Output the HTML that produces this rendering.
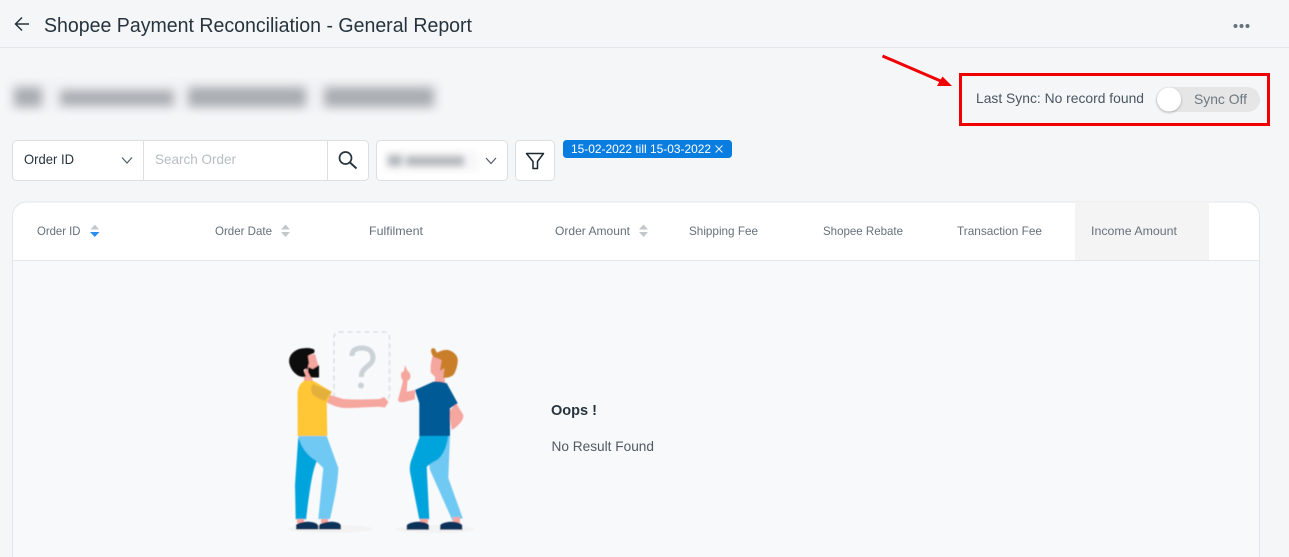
<!DOCTYPE html>
<html lang="en"><head><meta charset="utf-8"><title>Shopee Payment Reconciliation - General Report</title>
<style>
html,body{margin:0;padding:0;width:1289px;height:557px;overflow:hidden;background:#f5f6f8}
svg{display:block}
text{font-family:"Liberation Sans",sans-serif}
</style></head><body>
<svg width="1289" height="557" viewBox="0 0 1289 557" xmlns="http://www.w3.org/2000/svg">
<defs>
<filter id="b6" x="-20%" y="-100%" width="140%" height="300%"><feGaussianBlur stdDeviation="5"/></filter>
<filter id="b3" x="-20%" y="-100%" width="140%" height="300%"><feGaussianBlur stdDeviation="3.500"/></filter>
<filter id="soft" x="-5%" y="-5%" width="110%" height="110%"><feGaussianBlur stdDeviation="0.500"/></filter>
<filter id="sh" x="-50%" y="-50%" width="200%" height="200%"><feDropShadow dx="0" dy="1" stdDeviation="1.200" flood-color="#000" flood-opacity=".3"/></filter>
</defs>
<rect width="1289" height="557" fill="#f5f6f8"/>
<!-- header -->
<rect x="0" y="47" width="1289" height="1" fill="#e3e5e8"/>
<path d="M29 24H16M22 17.500L15.500 24L22 30.500" fill="none" stroke="#27343e" stroke-width="1.500"/>
<text x="44" y="32" font-size="20" fill="#27343e" textLength="428" lengthAdjust="spacingAndGlyphs">Shopee Payment Reconciliation - General Report</text>
<circle cx="1235.500" cy="26" r="2" fill="#68727b"/><circle cx="1241.500" cy="26" r="2" fill="#68727b"/><circle cx="1247.500" cy="26" r="2" fill="#68727b"/>
<!-- blurred company name -->
<rect x="8" y="80" width="433" height="31" fill="#f2f3f5" filter="url(#b3)"/>
<g fill="#a9adb2" filter="url(#b6)">
<rect x="14" y="87" width="28" height="20"/>
<rect x="60" y="90" width="114" height="16"/>
<rect x="188" y="87" width="118" height="20"/>
<rect x="324" y="87" width="110" height="20"/>
</g>
<!-- sync -->
<text x="976" y="103" font-size="14" fill="#4a5661" textLength="168" lengthAdjust="spacingAndGlyphs">Last Sync: No record found</text>
<rect x="1156" y="87" width="104" height="25" rx="12.500" fill="#e6e6e6"/>
<circle cx="1169" cy="99.500" r="12" fill="#fff" filter="url(#sh)"/>
<text x="1194" y="104" font-size="14" fill="#6d7880" textLength="53" lengthAdjust="spacingAndGlyphs">Sync Off</text>
<rect x="960.500" y="74.500" width="308" height="50" fill="none" stroke="#f00000" stroke-width="3"/>
<path d="M882.500 56L943 82" stroke="#f00000" stroke-width="3" fill="none"/>
<path d="M952 86L937 86L942.500 76.500Z" fill="#f00000"/>
<!-- search group -->
<rect x="12.500" y="140.500" width="356" height="40" rx="4" fill="#fff" stroke="#dcdfe2"/>
<rect x="143" y="141" width="1" height="39" fill="#dcdfe2"/>
<rect x="327" y="141" width="1" height="39" fill="#dcdfe2"/>
<text x="24" y="164" font-size="14" fill="#27343e" textLength="50" lengthAdjust="spacingAndGlyphs">Order ID</text>
<path d="M122 157.500L127 163L132 157.500" fill="none" stroke="#4a5661" stroke-width="1.100"/>
<text x="155" y="164" font-size="14" fill="#b9bdc1" textLength="81" lengthAdjust="spacingAndGlyphs">Search Order</text>
<circle cx="345.500" cy="158" r="6" fill="none" stroke="#27343e" stroke-width="1.700"/>
<path d="M350 162.500L356.500 168.500" stroke="#27343e" stroke-width="1.900"/>
<!-- second select -->
<rect x="376.500" y="140.500" width="131" height="40" rx="4" fill="#fff" stroke="#dcdfe2"/>
<rect x="385" y="151" width="93" height="20" fill="#f7f7f8" filter="url(#b3)"/>
<g fill="#b4b8bc" filter="url(#b3)"><rect x="388" y="155" width="14" height="11"/><rect x="406" y="156" width="58" height="10"/></g>
<path d="M486 158L491 163.500L496 158" fill="none" stroke="#4a5661" stroke-width="1.100"/>
<!-- filter -->
<rect x="515.500" y="140.500" width="39" height="40" rx="4" fill="#fff" stroke="#dcdfe2"/>
<path d="M526.500 153.500H543.500L537.500 161.500V168.500H533V161.500Z" fill="none" stroke="#1c2730" stroke-width="1.500" stroke-linejoin="round"/>
<!-- tag -->
<rect x="563" y="140" width="169" height="18" rx="3.500" fill="#0a7ee0"/>
<text x="571" y="153" font-size="12" fill="#fff" textLength="140" lengthAdjust="spacingAndGlyphs">15-02-2022 till 15-03-2022</text>
<path d="M715.500 145.500L722.500 152.500M722.500 145.500L715.500 152.500" stroke="#e6f2fc" stroke-width="1"/>
<!-- table -->
<path d="M12.500 570V216a14 14 0 0 1 14-14H1245.500a14 14 0 0 1 14 14V570Z" fill="#f8f9fb" stroke="#e3e5e8"/>
<path d="M13 260V216a13.500 13.500 0 0 1 13.500-13.500H1245.500A13.500 13.500 0 0 1 1259 216V260Z" fill="#fff"/>
<rect x="1075" y="202" width="134" height="58" fill="#f4f4f5"/>
<rect x="13" y="260" width="1246" height="1" fill="#e3e5e8"/>
<g font-size="12" fill="#65707a">
<text x="37" y="235" textLength="43.500" lengthAdjust="spacingAndGlyphs">Order ID</text>
<text x="215" y="235" textLength="57" lengthAdjust="spacingAndGlyphs">Order Date</text>
<text x="369" y="235" textLength="54" lengthAdjust="spacingAndGlyphs">Fulfilment</text>
<text x="555" y="235" textLength="75" lengthAdjust="spacingAndGlyphs">Order Amount</text>
<text x="689" y="235" textLength="69" lengthAdjust="spacingAndGlyphs">Shipping Fee</text>
<text x="823" y="235" textLength="80" lengthAdjust="spacingAndGlyphs">Shopee Rebate</text>
<text x="957" y="235" textLength="85" lengthAdjust="spacingAndGlyphs">Transaction Fee</text>
<text x="1091" y="235" textLength="86" lengthAdjust="spacingAndGlyphs">Income Amount</text>
</g>
<path d="M94.800 224.500L99 229.500H90.500Z" fill="#c4c7ca"/><path d="M94.800 237L99.500 232H90Z" fill="#2a8ff0"/>
<path d="M285.500 224.500L290 229.500H281Z" fill="#c4c7ca"/><path d="M285.500 237L290 232H281Z" fill="#c4c7ca"/>
<path d="M643.500 224.500L648 229.500H639Z" fill="#c4c7ca"/><path d="M643.500 237L648 232H639Z" fill="#c4c7ca"/>
<!-- empty state text -->
<text x="551" y="415" font-size="15" font-weight="bold" fill="#27343e" textLength="46" lengthAdjust="spacingAndGlyphs">Oops !</text>
<text x="551.500" y="451" font-size="14" fill="#4f5a64" textLength="102.500" lengthAdjust="spacingAndGlyphs">No Result Found</text>
<!-- illustration -->
<g filter="url(#soft)">
<ellipse cx="330" cy="529" rx="43" ry="4" fill="#f3f3f3"/>
<ellipse cx="435" cy="529" rx="39" ry="4" fill="#f3f3f3"/>
<rect x="334" y="332" width="55.500" height="68" rx="5" fill="none" stroke="#d7dade" stroke-width="1.300" stroke-dasharray="5 3.500"/>
<path d="M352 356C352 350 356 348 362 348C369 348 373 352 373 358C373 365 363 367 361.500 374V377" fill="none" stroke="#cbd2d8" stroke-width="5"/>
<circle cx="361" cy="385.500" r="3" fill="#cbd2d8"/>
<!-- left man -->
<path d="M308 355L315 354L319 368L312 378L314 384L304 384L304 372L306 368Z" fill="#f5a69e"/>
<path d="M314.500 350C311 347 303 348 299 349C291 352 288 358 289.500 364C291 370 295 374 299 376C302 377 304 377 306 376.500L303.500 370L306 368.500L307 370L309 363L308 356C310 354 314 354 314.500 352Z" fill="#0b0c0d"/>
<path d="M308 367L313 369L319 365V377.500H311L308 372Z" fill="#0b0c0d"/>
<path d="M330 395L343 399C355 400 368 399.500 380 399L384 397L388.500 402L385 407.500L379 406.700C368 407 355 408 343.500 408C336 407 331 404.500 326 402Z" fill="#f5a69e"/>
<path d="M297.500 393C298 387 301 382 305 380.700C309 380.200 312 380.500 315 381.700L331.700 391.700L326.700 403.300L327.300 436H297.700Z" fill="#ffc636"/>
<path d="M313 384L331.700 391.700L325 401C320 399 314 397 312 393C310.500 390 311 386 313 384Z" fill="#e3b03e"/>
<path d="M298.300 436H326.700L338.300 468C338 485 333 505 330 519H318.300L323.300 468L316.700 461.700L305 470Z" fill="#6fc9f3"/>
<path d="M298.300 437C302 449 308 456 316.700 461C311 475 309 497 306 519.300H295.700L295 485Z" fill="#00a4dd"/>
<rect x="297" y="519" width="7" height="4" fill="#f5a69e"/><rect x="321" y="519" width="7" height="4" fill="#f5a69e"/>
<path d="M296 529.500V525.500C298 521 315 520 318.300 525.500V529.500Z" fill="#10335a"/>
<path d="M319 529.500V525.500C322 521 339 520 341 525.500V529.500Z" fill="#10335a"/>
<!-- right man -->
<path d="M405 365L407 370L410 373.500C411 378 410 380 407.500 380.500L406.700 391.700L415 390V399.300L404 402C399 403 397 401 398.500 398L403 381C401 378 400.500 375 401.500 372.500L404 371Z" fill="#f5a69e"/>
<path d="M456 403L463.300 415C464 419 460 425 451.700 430L449 412Z" fill="#f5a69e"/>
<path d="M433 355L443 354L445 383H435V376.700L431 373C430 368 431 361 433 355Z" fill="#f5a69e"/>
<path d="M431 350C431.500 348 434 347.500 435 349L437 352.700C441 350.500 445 349.500 448.300 350C455 352 458.500 357 457.700 362C457 368 455 373 453.300 375C450 377.500 447 378 443.300 377.700L444.300 368.300L440 370.700L441.700 360L433.500 356.700C432 355 431 352.500 431 350Z" fill="#c97f2b"/>
<path d="M415 390L433.300 381.700C438 381 443 382 446.700 383.300L457.700 403.300L450 408.300V436.700H419.300V403.300Z" fill="#005a95"/>
<path d="M425 436H450L448.300 478L462.700 518.300L452.700 521L430 470Z" fill="#6fc9f3"/>
<path d="M420 436H448.300C447 447 443 455 438 459.500C434 462 429 464 426.700 467L429.300 519.300H419.300L410 472C409.500 468 410 464 411 461Z" fill="#00a4dd"/>
<rect x="420" y="519" width="8" height="4" fill="#f5a69e"/><rect x="453" y="517" width="7" height="6" fill="#f5a69e"/>
<path d="M406.700 529.700V525.500C410 521 426 520 429 525.500V529.700Z" fill="#10335a"/>
<path d="M440 529.700V525.500C443 521 459 520 462.300 525.500V529.700Z" fill="#10335a"/>
</g>
</svg>
</body></html>
